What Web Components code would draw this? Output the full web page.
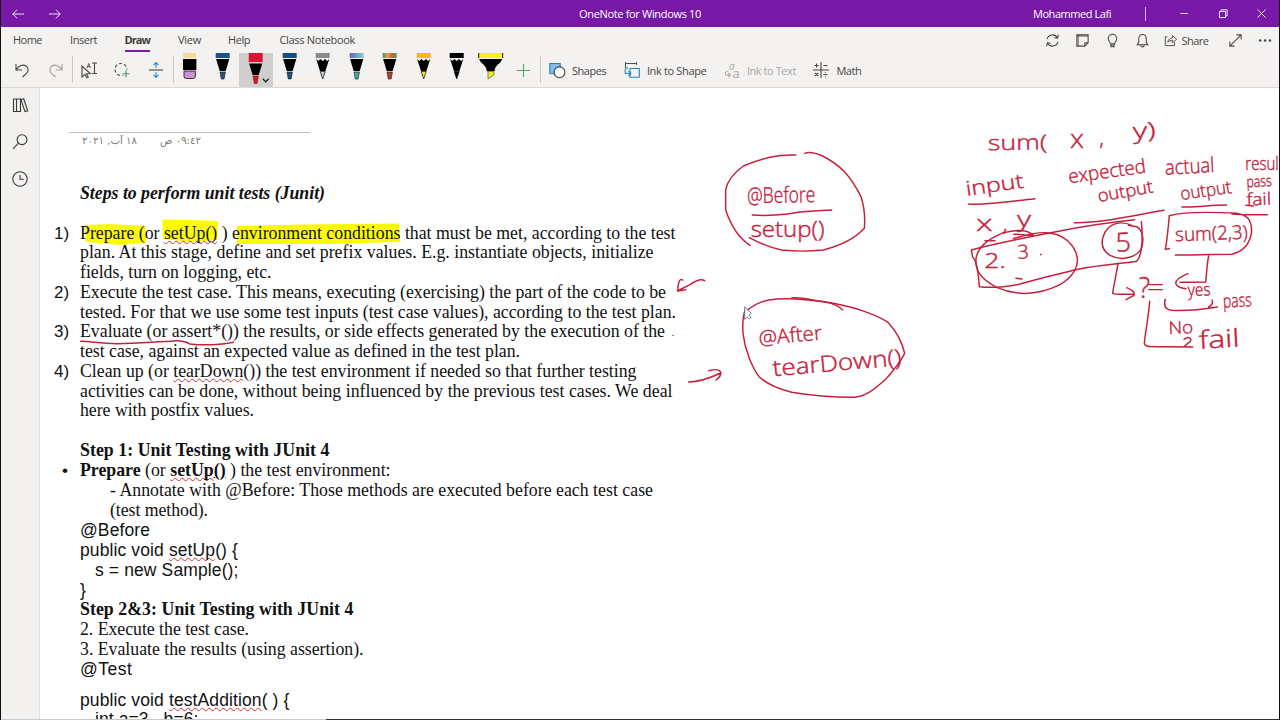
<!DOCTYPE html>
<html lang="en">
<head>
<meta charset="utf-8">
<title>OneNote for Windows 10</title>
<style>
  body {
    margin: 0;
    width: 1280px;
    height: 720px;
    overflow: hidden;
    background: #ffffff;
  }
</style>
</head>
<body>
<note-app>
  <title-bar slot="title" app="OneNote for Windows 10" user="Mohammed Lafi"></title-bar>
  <ribbon-tabs slot="tabs">
    <ribbon-tab w="29" gap="28">Home</ribbon-tab>
    <ribbon-tab w="27" gap="27.5">Insert</ribbon-tab>
    <ribbon-tab w="25.5" gap="28" active>Draw</ribbon-tab>
    <ribbon-tab w="23" gap="27">View</ribbon-tab>
    <ribbon-tab w="22" gap="29.5">Help</ribbon-tab>
    <ribbon-tab w="75.5" gap="0">Class Notebook</ribbon-tab>
  </ribbon-tabs>
  <draw-tools slot="tools"></draw-tools>
  <side-rail slot="rail"></side-rail>

  <note-page slot="page">
    <note-block pitch="19.75">
      <note-line w="245" kind="title">Steps to perform unit tests (Junit)</note-line>
      <note-line></note-line>
      <note-line w="595.5" marker="1)">Prepare (or <misspelt-word>setUp()</misspelt-word> ) environment conditions that must be met, according to the test</note-line>
      <note-line w="573.5">plan. At this stage, define and set prefix values. E.g. instantiate objects, initialize</note-line>
      <note-line w="191.5">fields, turn on logging, etc.</note-line>
      <note-line w="586" marker="2)">Execute the test case. This means, executing (exercising) the part of the code to be</note-line>
      <note-line w="596">tested. For that we use some test inputs (test case values), according to the test plan.</note-line>
      <note-line w="585" marker="3)">Evaluate (or assert*()) the results, or side effects generated by the execution of the</note-line>
      <note-line w="440">test case, against an expected value as defined in the test plan.</note-line>
      <note-line w="556.5" marker="4)">Clean up (or <misspelt-word>tearDown</misspelt-word>()) the test environment if needed so that further testing</note-line>
      <note-line w="592.5">activities can be done, without being influenced by the previous test cases. We deal</note-line>
      <note-line w="174">here with postfix values.</note-line>
      <note-line></note-line>
    </note-block>
    <note-block pitch="19.92">
      <note-line w="249.5" kind="heading">Step 1: Unit Testing with JUnit 4</note-line>
      <note-line w="310.5" marker="•" space=".6"><b>Prepare</b> (or <b><misspelt-word>setUp</misspelt-word><u>()</u></b> ) the test environment:</note-line>
      <note-line w="543" indent="30">- Annotate with @Before: Those methods are executed before each test case</note-line>
      <note-line w="98" indent="30">(test method).</note-line>
      <note-line w="70" kind="code">@Before</note-line>
      <note-line w="158" kind="code">public void <misspelt-word>setUp</misspelt-word>() {</note-line>
      <note-line w="143.5" kind="code" indent="15">s = new Sample();</note-line>
      <note-line kind="code">}</note-line>
      <note-line w="273.5" kind="heading" space="-.6">Step 2&amp;3: Unit Testing with JUnit 4</note-line>
      <note-line w="169">2. Execute the test case.</note-line>
      <note-line w="283.5">3. Evaluate the results (using assertion).</note-line>
      <note-line w="52.5" kind="code">@Test</note-line>
      <note-line w="209.5" kind="code" space="11.6">public void <misspelt-word>testAddition</misspelt-word>( ) {</note-line>
      <note-line w="103.5" kind="code" indent="15" space="-1">int a=3 , b=6;</note-line>
    </note-block>
    <ink-layer slot="ink"></ink-layer>
  </note-page>
</note-app>

<script>
(function () {
  // Shared base: stamps the markup into an open shadow root.
  class BaseElement extends HTMLElement {
    constructor() {
      super();
      this._shadowRoot = this.attachShadow({ mode: 'open' });
      this._shadowRoot.innerHTML = this.template().trim();
    }
    $(selector) {
      return this._shadowRoot.querySelector(selector);
    }
  }

  // Spreads the letters of a run so that it takes the given width.
  function fitText($el, width, count) {
    if (!width || !count) return;
    $el.style.letterSpacing = '0px';
    const current = $el.getBoundingClientRect().width;
    $el.style.letterSpacing = (width - current) / count + 'px';
  }

  const UI_FONT = '"Open Sans", "Noto Sans", sans-serif';

  const icons = {
    undo: '<path d="M2 2v6h6M2.3 7.6C5 3.5 9 2 12 4c3.200 2.200 2.400 5.400.5 7.300L8.500 15"/>',
    redo: '<path d="M14 2v6H8M13.700 7.600C11 3.500 7 2 4 4c-3.200 2.200-2.400 5.400-.5 7.300L7.500 15"/>',
    select: '<path d="M1 4v11l3-2.700 1.800 3.500 1.500-.8-1.700-3.300 3.700-.2z"/><path d="M6 6l1.700-4.500L9.500 6M6.600 4.500h2.300" stroke-width=".9"/><path d="M11 1h5M11 11.500h5M13.500 1v10.500"/>',
    lasso: '<circle cx="7" cy="7.500" r="6" stroke-dasharray="3 2.100"/><path d="M8 11.500h8M12 7.500v8" stroke="#f3f2f0" stroke-width="4"/><path d="M8.500 11.800h7M12 8.300v7" stroke="#3a9a63"/>',
    space: '<path d="M1 8h14" stroke="#8a8886" stroke-width="1.800"/><path d="M8 6V.8M5.600 3L8 .6 10.400 3M8 10v5.200M5.600 13L8 15.400l2.400-2.400" stroke="#2b88d8"/>',
    plus: '<path d="M1 8h14M8 1v14" stroke="#4aa564"/>',
    shapes: '<path d="M.8 1.500h10.400v10.300H.8z" fill="#83bbec" stroke="#2f7fc4"/><circle cx="10.500" cy="10.300" r="5.400" fill="#fff" stroke="#444"/>',
    inkshape: '<path d="M1.500 1.500h11M1.500 0v3M12.500 0v3M1.500 1.500V6" stroke="#555"/><path d="M6 6.500h9.300v8.800H6z" stroke="#2684c9"/><path d="M4 5.500C1.500 6.500.5 9 1.500 11.500h5M4.500 9l2.400 2.500L4.500 14" stroke="#2684c9"/>',
    inktext: '<path d="M4.500 9C1.500 9 .5 11.500 2 13h4M4.300 11l2 2-2 2"/>',
    math: '<path d="M8 0v16M0 8h16M1.500 3.500h4M3.500 1.500v4M10.500 3.500h4M1.800 10.800l3.400 3.400M5.200 10.800l-3.400 3.400M10.500 12.500h4M12.500 10v.8M12.500 14.400v.8"/>',
    sync: '<path d="M2.200 6.500A6 5.800 0 0 1 13.300 5M13.800 9.500A6 5.800 0 0 1 2.700 11M14.300 1.800L13.500 5.500l-3.500-.4M1.700 14.200l.8-3.700 3.500.4"/>',
    note: '<path d="M2 2h12v8.500L10.500 14H2zM14 10.500h-3.500V14" /><path d="M3.300 2v12M2 3.200h12" stroke-width="1"/>',
    bulb: '<path d="M5.800 11.500C5.600 9.500 3.500 8.800 3.500 6A4.500 4.700 0 0 1 12.500 6c0 2.800-2.100 3.500-2.300 5.500zM6 13h4M6.300 11.500v3.200h3.400v-3.200"/>',
    bell: '<path d="M2.300 12.500h11.400L12 10V6.200a4 4.700 0 0 0-8 0V10zM6.200 13a1.800 1.800 0 0 0 3.600 0"/>',
    share: '<path d="M4 4.500H1.500V15h11v-4"/><path d="M4.500 11C5 7.500 7 6 10 6V3l5 4.500-5 4V8.700C7.500 8.700 6 9.500 4.500 11z"/>',
    expand: '<path d="M2.500 13.500l11-11M9 2h5v5M2 9v5h5"/>',
    more: '<g fill="#444" stroke="none"><circle cx="1.500" cy="8" r="1.500"/><circle cx="7.500" cy="8" r="1.500"/><circle cx="13.500" cy="8" r="1.500"/></g>',
    back: '<path d="M15 8H2M7 3L2 8l5 5"/>',
    forward: '<path d="M1 8h13M9 3l5 5-5 5"/>',
    min: '<path d="M3 8h9"/>',
    restore: '<path d="M3 5.500h7.500V13H3zM5 5.500V3.500h7.500v7.500h-2"/>',
    close: '<path d="M3 3l10 10M13 3L3 13"/>',
    library: '<path d="M1.500 2h3v12.500h-3zM4.500 2h4v12.500h-4zM9 2.700l2.700-.9 4 12-2.700.8z" />',
    search: '<circle cx="10" cy="5.700" r="4.900"/><path d="M6.500 9.200L1 14.800"/>',
    recent: '<circle cx="8" cy="8" r="7.200"/><path d="M8 4v4.300h3.700"/>'
  };

  class UiIcon extends BaseElement {
    template() {
      return `
      <style>
        :host { display: block; flex: none; }
        svg {
          display: block;
          fill: none;
          stroke: currentColor;
          stroke-width: 1.1;
          overflow: visible;
        }
      </style>
      <svg viewBox="0 0 16 16"></svg>`;
    }
    connectedCallback() {
      const size = this.getAttribute('size') || 16;
      const $svg = this.$('svg');
      $svg.setAttribute('width', size);
      $svg.setAttribute('height', size);
      $svg.innerHTML = icons[this.getAttribute('name')] || '';
    }
  }

  class UiLabel extends BaseElement {
    template() {
      return `
      <style>
        :host { display: block; font-family: ${UI_FONT}; font-size: 11px; white-space: nowrap; }
        span { display: inline-block; }
      </style>
      <span><slot></slot></span>`;
    }
    connectedCallback() {
      fitText(this.$('span'), Number(this.getAttribute('w')), this.textContent.length);
    }
  }

  class TitleBar extends BaseElement {
    template() {
      return `
      <style>
        :host {
          display: grid;
          grid-template-columns: 1fr auto 1fr;
          align-items: center;
          height: 27px;
          background: #7719a6;
          color: #ffffff;
        }
        .nav { display: flex; gap: 23px; padding-left: 11px; }
        .nav ui-icon { opacity: .9; }
        .right { display: flex; align-items: center; justify-content: flex-end; padding-right: 12px; }
        .bar { width: 1px; height: 14px; background: #d6b5e6; margin: 0 32px 0 34px; }
        .buttons { display: flex; gap: 25.5px; }
      </style>
      <div class="nav"><ui-icon name="back" size="14"></ui-icon><ui-icon name="forward" size="14"></ui-icon></div>
      <ui-label class="app" w="122"></ui-label>
      <div class="right">
        <ui-label class="user" w="78"></ui-label>
        <div class="bar"></div>
        <div class="buttons">
          <ui-icon name="min" size="13"></ui-icon>
          <ui-icon name="restore" size="13"></ui-icon>
          <ui-icon name="close" size="13"></ui-icon>
        </div>
      </div>`;
    }
    connectedCallback() {
      this.setLabel('.app', this.getAttribute('app'));
      this.setLabel('.user', this.getAttribute('user'));
    }
    setLabel(selector, text) {
      const $label = this.$(selector);
      $label.textContent = text;
      $label.connectedCallback();
    }
  }

  class RibbonTab extends BaseElement {
    template() {
      return `
      <style>
        :host {
          display: block;
          height: 25px;
          box-sizing: border-box;
          line-height: 26px;
          font-family: ${UI_FONT};
          font-size: 11px;
          color: #444444;
          white-space: nowrap;
        }
        :host([active]) { font-weight: 700; border-bottom: 2px solid #7719aa; color: #3b3b3b; }
        span { display: inline-block; }
      </style>
      <span><slot></slot></span>`;
    }
    connectedCallback() {
      this.style.marginRight = this.getAttribute('gap') + 'px';
      this.style.width = this.getAttribute('w') + 'px';
      fitText(this.$('span'), Number(this.getAttribute('w')), this.textContent.length);
    }
  }

  class RibbonTabs extends BaseElement {
    template() {
      return `
      <style>
        :host { display: flex; justify-content: space-between; height: 26px; color: #484644; }
        .tabs { display: flex; padding-left: 13px; }
        .actions { display: flex; align-items: center; }
        .cell { display: flex; align-items: center; justify-content: center; width: 30px; }
        .share { width: 62.5px; gap: 4px; box-sizing: border-box; padding-right: 5px; }
      </style>
      <div class="tabs"><slot></slot></div>
      <div class="actions">
        <div class="cell"><ui-icon name="sync" size="15"></ui-icon></div>
        <div class="cell"><ui-icon name="note" size="15"></ui-icon></div>
        <div class="cell"><ui-icon name="bulb" size="15"></ui-icon></div>
        <div class="cell"><ui-icon name="bell" size="15"></ui-icon></div>
        <div class="cell share"><ui-icon name="share" size="13.5"></ui-icon><ui-label w="27">Share</ui-label></div>
        <div class="cell"><ui-icon name="expand" size="15"></ui-icon></div>
        <div class="cell"><ui-icon name="more" size="13"></ui-icon></div>
      </div>`;
    }
  }

  // One pen of the tray. kind: pen, pencil, eraser or marker.
  class InkPen extends BaseElement {
    template() {
      return `
      <style>
        :host { display: block; flex: none; width: 33.45px; height: 34px; }
        :host([selected]) { background: #d1cfcd; }
        svg { display: block; }
      </style>
      <svg width="33.45" height="34" viewBox="-16.7 0 33.45 34"></svg>`;
    }
    connectedCallback() {
      const cap = this.getAttribute('cap');
      const tip = this.getAttribute('tip');
      const kind = this.getAttribute('kind') || 'pen';
      const stops = cap.split(',');
      const defs = `<defs><linearGradient id="cap">${stops.map((c, i) =>
        `<stop offset="${stops.length > 1 ? i / (stops.length - 1) : 0}" stop-color="${c}"/>`).join('')}</linearGradient></defs>`;
      const shapes = {
        pen: `<path d="M-7 0H7V5H-7z" fill="url(#cap)"/>
          <path d="M-6.600 6H6.600L3 18H-3z" fill="#000"/>
          <path d="M-2.700 19H2.700L1.400 26H-1.400z" fill="${tip}" stroke="#111" stroke-width=".6"/>`,
        selected: `<path d="M-7 0H7V9H-7z" fill="url(#cap)"/>
          <path d="M-6.600 10.500H6.600L3 22H-3z" fill="#000"/>
          <path d="M-2.700 23H2.700L1.400 30.500H-1.400z" fill="${tip}" stroke="#7b1020" stroke-width=".6"/>
          <path d="M7 25.800l3 3 3-3" fill="none" stroke="#222" stroke-width="1.200"/>`,
        pencil: `<path d="M-7 0H7V5H-7z" fill="url(#cap)"/>
          <path d="M-6.600 6L-4.500 8-2.300 6 0 8 2.300 6 4.500 8 6.600 6 2.700 18H-2.700z" fill="#000"/>
          <path d="M-2.600 18.500H2.600L0 26z" fill="${tip}" stroke="#111" stroke-width=".7"/>`,
        eraser: `<path d="M-6.500 0H6.500V5H-6.500z" fill="url(#cap)"/>
          <path d="M-6.700 6H6.700V17H-6.700z" fill="#000"/>
          <path d="M-5.700 18H5.700V23.500Q5.500 25.500 3.500 25.500H-3.500Q-5.500 25.500-5.700 23.500z" fill="${tip}" stroke="#111" stroke-width=".8"/>`,
        marker: `<path d="M-12 0H12V5H-12z" fill="url(#cap)"/><path d="M-12 0V5M12 0V5" stroke="#111"/>
          <path d="M-11.500 6H11.500C10 11 4 12 4 18H-4C-4 12-10 11-11.500 6z" fill="#000"/>
          <path d="M-3.200 18.500H3.200V22L-2.700 26V18.500z" fill="${tip}" stroke="#444" stroke-width=".6"/>`
      };
      this.$('svg').innerHTML = defs + shapes[this.hasAttribute('selected') ? 'selected' : kind];
    }
  }

  class DrawTools extends BaseElement {
    template() {
      return `
      <style>
        :host { display: flex; height: 34px; padding-left: 5.4px; color: #484644; }
        .group { display: flex; flex: none; }
        .cell { flex: none; width: 33.45px; height: 34px; display: flex; align-items: center; justify-content: center; }
        .line { flex: none; width: 1px; margin: 3px -1px 4px 0; background: #c8c6c4; }
        .dim { color: #a9a7a5; }
        .labels { display: flex; align-items: center; padding-left: 8.5px; }
        .entry { display: flex; align-items: center; gap: 7px; margin-right: 17.5px; }
        .glyphs { display: flex; width: 16px; height: 16px; position: relative; }
        .a1 { font: italic 10px/10px ${UI_FONT}; margin: -1px 0 0 5px; }
        .a2 { font: 13px/10px ${UI_FONT}; margin: 6px 0 0 -2px; }
        .glyphs ui-icon { position: absolute; left: 0; top: 0; }
      </style>
      <div class="group">
        <div class="cell"><ui-icon name="undo" size="16"></ui-icon></div>
        <div class="cell" style="color:#a19f9d"><ui-icon name="redo" size="16"></ui-icon></div>
        <div class="line"></div>
        <div class="cell"><ui-icon name="select" size="16"></ui-icon></div>
        <div class="cell"><ui-icon name="lasso" size="16"></ui-icon></div>
        <div class="cell"><ui-icon name="space" size="16"></ui-icon></div>
        <div class="line"></div>
      </div>
      <div class="group">
        <ink-pen kind="eraser" cap="#f5dc96" tip="#cf8fd6"></ink-pen>
        <ink-pen cap="#1d5093" tip="#28558c"></ink-pen>
        <ink-pen cap="#d8142f" tip="#d8142f" selected></ink-pen>
        <ink-pen cap="#14507d" tip="#1c567e"></ink-pen>
        <ink-pen kind="pencil" cap="#888a8b" tip="#c3c3c3"></ink-pen>
        <ink-pen cap="#6a5fae,#6fa0c9,#7fd0cf" tip="#4aa59a"></ink-pen>
        <ink-pen cap="#2f9a62,#e8a33a,#c9643f,#4b9b6b" tip="#b8402c"></ink-pen>
        <ink-pen kind="pencil" cap="#f8b81c" tip="#f3dc3a"></ink-pen>
        <ink-pen kind="pencil" cap="#000000" tip="#000000"></ink-pen>
        <ink-pen kind="marker" cap="#f4f410" tip="#e9ee1c"></ink-pen>
        <div class="cell"><ui-icon name="plus" size="15"></ui-icon></div>
        <div class="line"></div>
      </div>
      <div class="labels">
        <div class="entry"><ui-icon name="shapes" size="16"></ui-icon><ui-label w="34.500">Shapes</ui-label></div>
        <div class="entry"><ui-icon name="inkshape" size="16"></ui-icon><ui-label w="59.500">Ink to Shape</ui-label></div>
        <div class="entry dim"><div class="glyphs"><ui-icon name="inktext" size="16"></ui-icon><span class="a1">a</span><span class="a2">a</span></div><ui-label w="49">Ink to Text</ui-label></div>
        <div class="entry"><ui-icon name="math" size="16"></ui-icon><ui-label w="25">Math</ui-label></div>
      </div>`;
    }
  }

  class SideRail extends BaseElement {
    template() {
      return `
      <style>
        :host {
          display: flex;
          flex-direction: column;
          align-items: center;
          gap: 21px;
          width: 40px;
          padding-top: 9px;
          box-sizing: border-box;
          background: #f2f1ef;
          border-right: 1px solid #e3e2e0;
          color: #3b3a39;
        }
      </style>
      <ui-icon name="library"></ui-icon>
      <ui-icon name="search"></ui-icon>
      <ui-icon name="recent"></ui-icon>`;
    }
  }

  class MisspeltWord extends BaseElement {
    template() {
      return `<style>
        :host {
          display: inline;
          text-decoration: underline wavy #cf3434 .8px;
          text-underline-offset: 1px;
          text-decoration-skip-ink: none;
        }
      </style><slot></slot>`;
    }
  }

  class NoteLine extends BaseElement {
    template() {
      return `
      <style>
        :host {
          display: flex;
          height: var(--pitch);
          line-height: var(--pitch);
          font-family: "Liberation Serif", serif;
          font-size: 17.8px;
          color: #111111;
          white-space: pre;
        }
        :host([kind="title"]) { font-weight: 700; font-style: italic; }
        :host([kind="heading"]) { font-weight: 700; }
        :host([kind="code"]) { font-family: "Liberation Sans", sans-serif; font-size: 17.5px; }
        .marker { flex: none; width: 26px; font-family: "Liberation Sans", sans-serif; font-size: 17px; }
        .marker.dot { text-indent: 8px; }
        .text { flex: none; }
      </style>
      <span class="marker"></span><span class="text"><slot></slot></span>`;
    }
    connectedCallback() {
      const marker = this.getAttribute('marker') || '';
      this.$('.marker').textContent = marker;
      this.$('.marker').classList.toggle('dot', marker === '•');
      this.$('.text').style.marginLeft = (this.getAttribute('indent') || 0) + 'px';
      if (this.hasAttribute('space')) {
        this.style.marginTop = this.getAttribute('space') + 'px';
      }
      fitText(this.$('.text'), Number(this.getAttribute('w')), this.textContent.length);
    }
  }

  class NoteBlock extends BaseElement {
    template() {
      return `
      <style>:host { display: block; padding-left: 14px; }</style>
      <slot></slot>`;
    }
    connectedCallback() {
      this.style.setProperty('--pitch', this.getAttribute('pitch') + 'px');
    }
  }

  class NotePage extends BaseElement {
    template() {
      return `
      <style>
        :host { display: block; height: 631px; padding-top: 44px; box-sizing: border-box; overflow: hidden; background: #ffffff; }
        .stamp {
          display: flex;
          width: 241px;
          height: 17px;
          margin: 0 0 34px 29px;
          border-top: 1px solid #bdbdbd;
          font: 10.2px/16px "DejaVu Sans", sans-serif;
          color: #7b7b7b;
        }
        .date { margin-left: 13px; width: 55px; }
        .time { margin-left: 24px; width: 40px; }
        .stamp span { display: block; white-space: nowrap; }
        .body { position: relative; z-index: 1; }
      </style>
      <div class="stamp"><span class="date" dir="rtl">١٨ آب, ٢٠٢١</span><span class="time" dir="rtl">٠٩:٤٢ ص</span></div>
      <div class="body"><slot></slot></div>
      <slot name="ink"></slot>`;
    }
  }

  // Freehand ink over the whole window: highlighter under the text, red pen on top.
  class InkLayer extends BaseElement {
    template() {
      const word = (x, y, size, length, angle, text) =>
        `<text transform="translate(${x} ${y}) rotate(${angle})" font-size="${size}" textLength="${length}" lengthAdjust="spacingAndGlyphs">${text}</text>`;
      return `
      <style>
        svg { position: absolute; left: 0; top: 0; pointer-events: none; }
        .marker { z-index: 0; fill: #fbfb03; }
        .pen { z-index: 2; fill: none; stroke: #c5203a; stroke-width: 4.4; stroke-linecap: round; stroke-linejoin: round; }
        text { font-family: "Open Sans", Lato, sans-serif; font-weight: 300; fill: #c5203a; stroke: #c5203a; stroke-width: 1.2; }
      </style>
      <svg class="marker" width="1280" height="720">
        <path d="M84 225L110 224 145 226 146 243 120 245 86 242z"/>
        <path d="M162.500 219.500L190 220 218 221 217 240 190 242 163 239z"/>
        <path d="M236.500 226L300 224.500 399 223.500 400 242 330 244 237 244z"/>
      </svg>
      <svg class="pen" width="1280" height="720">
        <g transform="translate(700 140) scale(.33333)">
          <path d="M288 45C230 43 190 54 130 78C100 100 82 120 77 150L77 210C87 240 110 290 150 316"/>
          <path d="M314 40C330 34 350 40 368 48C420 75 450 105 483 170C493 200 496 230 493 265C470 290 430 315 370 330C320 335 280 334 245 330C205 322 170 305 148 293"/>
          <path d="M157 225C220 230 260 222 300 216C330 213 370 211 395 210"/>
          <path d="M142 510C170 490 190 480 230 477C290 474 340 480 400 490C480 505 540 530 565 548C590 575 605 600 614 640C604 665 580 690 560 715C520 752 495 770 462 772C410 772 340 768 275 757C230 745 195 727 177 710C155 680 135 630 129 580C127 550 130 525 136 508"/>
          <path d="M275 474C300 470 325 478 350 482C380 486 405 488 428 510"/>
          ${word(142, 190, 66, 204, -1, '@Before')}
          ${word(152, 291, 66, 222, 0, 'setup()')}
          ${word(178, 615, 60, 190, -5, '@After')}
          ${word(220, 709, 68, 388, -5, 'tearDown()')}
          <path d="M134 502L134 538 142 531 148 537 153 533 147 526 153 521z" fill="#fff" stroke="#53606d" stroke-width="2.500"/>
        </g>
        <g transform="translate(400 220) scale(.33333)">
          <path d="M914 182C905 176 890 180 870 194L832 213M848 180C838 172 832 195 834 213L857 209"/>
          <path d="M866 486C900 486 930 474 962 459M926 452C945 447 957 446 962 456C965 466 958 472 948 480"/>
          <circle cx="819" cy="346" r="1" stroke-width="2"/>
        </g>
        <g transform="translate(60 280) scale(.33333)">
          <path d="M62 184C90 184 120 190 170 191C230 191 280 186 330 184C360 179 375 184 390 192C430 197 490 194 520 187"/>
        </g>
        <g transform="translate(950 100) scale(.33333)">
          ${word(114, 151, 62, 178, -1, 'sum(')}
          ${word(360, 143, 78, 42, 0, 'x')}
          ${word(448, 136, 60, 14, 0, ',')}
          ${word(550, 116, 66, 68, -3, 'y)')}
          ${word(50, 287, 60, 175, -8, 'input')}
          ${word(358, 250, 58, 234, -8, 'expected')}
          ${word(446, 306, 52, 168, -10, 'output')}
          ${word(646, 224, 62, 148, -3, 'actual')}
          ${word(694, 300, 54, 154, -8, 'output')}
          ${word(886, 210, 54, 100, 0, 'resul')}
          ${word(890, 262, 46, 76, -3, 'pass')}
          ${word(890, 316, 50, 74, -2, 'fail')}
          <path d="M56 312C110 316 180 304 255 296M696 321C740 323 790 314 830 315M888 316L910 318"/>
        </g>
        <g transform="translate(950 200) scale(.33333)">
          ${word(78, 93, 68, 50, 0, 'x')}
          ${word(158, 94, 60, 14, 0, ',')}
          ${word(201, 82, 66, 42, 0, 'y')}
          ${word(103, 203, 58, 64, 0, '2.')}
          ${word(203, 176, 58, 34, -2, '3')}
          ${word(498, 155, 78, 46, -3, '5')}
          ${word(676, 124, 58, 218, -2, 'sum(2,3)')}
          ${word(566, 294, 88, 34, 0, '?')}
          ${word(591, 288, 70, 52, 0, '=')}
          ${word(714, 288, 52, 68, -2, 'yes')}
          ${word(820, 323, 56, 86, -3, 'pass')}
          ${word(656, 402, 52, 74, -2, 'No')}
          ${word(748, 446, 74, 122, -3, 'fail')}
          <path d="M373 68C450 70 540 48 642 31"/>
          <path d="M554 59C480 67 400 78 330 93C230 112 130 132 64 150L68 172C80 180 85 215 88 260C120 264 160 262 210 252C270 236 330 220 385 208C450 194 530 190 560 184C575 170 580 120 574 65"/>
          <path d="M105 122L135 122M198 235L216 237M272 163L273 164M192 103C210 100 225 108 250 105C232 88 200 88 160 98C110 120 85 140 78 175C75 210 90 235 140 262C200 288 265 286 330 254C370 230 385 200 382 175C376 135 340 100 290 98C250 96 220 108 190 116"/>
          <path d="M545 76C510 60 480 72 466 95C450 125 455 150 480 166C515 184 555 174 573 148C584 120 578 90 560 80L536 76"/>
          <path d="M658 146L646 148C652 120 655 75 658 47C700 36 790 36 860 40C890 46 905 55 905 95C900 130 880 155 845 163C790 163 720 165 676 165M846 42C880 46 920 44 952 44"/>
          <path d="M504 190C500 220 492 250 488 280C505 286 530 281 552 283M530 263C548 270 556 278 552 286L528 299"/>
          <path d="M776 168C770 195 770 225 767 246C740 246 715 247 690 247M714 221C690 230 678 240 677 250C680 259 694 265 708 266"/>
          <path d="M646 298C640 315 645 328 665 331C700 333 760 328 802 321M786 300C790 308 785 316 776 321"/>
          <path d="M599 304C596 350 585 400 583 430C585 442 600 440 640 440L728 441M702 418C715 408 728 414 720 425L704 438"/>
        </g>
      </svg>`;
    }
  }

  class NoteApp extends BaseElement {
    template() {
      return `
      <style>
        :host {
          display: flex;
          flex-direction: column;
          position: relative;
          width: 1280px;
          height: 720px;
          box-sizing: border-box;
          overflow: hidden;
          background: #f3f2f0;
        }
        .ribbon { height: 61px; border-bottom: 1px solid #dad9d7; box-sizing: border-box; }
        .main { display: flex; height: 631px; }
        .page { flex: 1; }
        .rail { display: flex; }
        .edge { display: flex; height: 1px; }
        .edge .light { width: 326px; background: #c9c9c9; }
        .edge .dark { flex: 1; background: #2f2f2f; }
        .side { position: absolute; top: 0; bottom: 0; width: 1px; background: #101010; z-index: 3; }
        .side.left { left: 0; }
        .side.right { right: 0; }
      </style>
      <slot name="title"></slot>
      <div class="ribbon"><slot name="tabs"></slot><slot name="tools"></slot></div>
      <div class="main">
        <div class="rail"><slot name="rail"></slot></div>
        <div class="page"><slot name="page"></slot></div>
      </div>
      <div class="edge"><div class="light"></div><div class="dark"></div></div>
      <div class="side left"></div>
      <div class="side right"></div>`;
    }
  }

  customElements.define('ui-icon', UiIcon);
  customElements.define('ui-label', UiLabel);
  customElements.define('ink-pen', InkPen);
  customElements.define('note-app', NoteApp);
  customElements.define('title-bar', TitleBar);
  customElements.define('ribbon-tabs', RibbonTabs);
  customElements.define('ribbon-tab', RibbonTab);
  customElements.define('draw-tools', DrawTools);
  customElements.define('side-rail', SideRail);
  customElements.define('note-page', NotePage);
  customElements.define('note-block', NoteBlock);
  customElements.define('misspelt-word', MisspeltWord);
  customElements.define('note-line', NoteLine);
  customElements.define('ink-layer', InkLayer);
})()
</script>
</body>
</html>
